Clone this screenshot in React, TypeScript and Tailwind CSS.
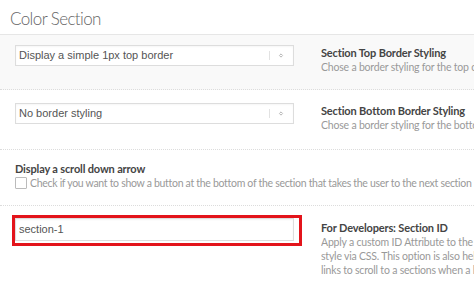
import { ChevronUp, ChevronDown } from 'lucide-react';

const SelectBox = ({ value }: { value: string }) => (
  <div className="h-[21px] w-[279px] shrink-0 border border-[#dddddd] bg-white flex items-center pl-[3px] pr-[9px] shadow-[inset_0_1px_2px_rgba(0,0,0,0.04)]">
    <span className="flex-1 text-[11px] text-[#555] font-['Liberation_Sans',Arial,sans-serif] whitespace-nowrap">{value}</span>
    <span className="h-[9px] w-px bg-[#e2e2e2] mr-[8px]" />
    <span className="flex flex-col items-center text-[#888] -space-y-[3px]">
      <ChevronUp className="h-[5px] w-[6px]" strokeWidth={3} />
      <ChevronDown className="h-[5px] w-[6px]" strokeWidth={3} />
    </span>
  </div>
);

const Help = ({ title, lines }: { title: string; lines: string[] }) => (
  <div className="flex-1 min-w-0 overflow-hidden">
    <div className="text-[11px] font-bold text-[#444] leading-[14px] tracking-[-0.15px] whitespace-nowrap">{title}</div>
    {lines.map(l => (
      <div key={l} className="text-[10.5px] text-[#999] leading-[14px] tracking-[-0.2px] whitespace-nowrap">{l}</div>
    ))}
  </div>
);

const App = () => {
  return (
    <div className="w-[474px] h-[288px] overflow-hidden bg-white font-['Lato',sans-serif]">
      {/* Header */}
      <div className="h-[35px] border-b border-[#e6e6e6] pl-[10px] pt-[8px]">
        <h2 className="text-[17px] font-light text-[#666] leading-[22px] tracking-[-0.6px]">Color Section</h2>
      </div>

      {/* Top border */}
      <div className="h-[55px] bg-[#f9f9f9] border-b border-dotted border-[#dcdcdc] flex pl-[15px] pt-[10px] gap-[27px]">
        <SelectBox value="Display a simple 1px top border" />
        <div className="flex-1 min-w-0 flex pt-[1px]">
          <Help title="Section Top Border Styling" lines={['Chose a border styling for the top of this section.']} />
        </div>
      </div>

      {/* Bottom border */}
      <div className="h-[60px] border-b border-dotted border-[#dcdcdc] flex pl-[15px] pt-[13px] gap-[27px]">
        <SelectBox value="No border styling" />
        <div className="flex-1 min-w-0 flex pt-[1px]">
          <Help title="Section Bottom Border Styling" lines={['Chose a border styling for the bottom of this section.']} />
        </div>
      </div>

      {/* Scroll arrow */}
      <div className="h-[56px] border-b border-dotted border-[#dcdcdc] pl-[15px] pt-[12px] overflow-hidden">
        <div className="text-[11px] font-bold text-[#444] leading-[14px] tracking-[-0.15px]">Display a scroll down arrow</div>
        <div className="flex items-center gap-[3px] whitespace-nowrap">
          <span className="h-[12px] w-[12px] border border-[#bbb] bg-white shrink-0 rounded-[1px]" />
          <span className="text-[10.5px] text-[#999] leading-[14px] tracking-[-0.3px]">Check if you want to show a button at the bottom of the section that takes the user to the next section by scrolling down.</span>
        </div>
      </div>

      {/* Section ID */}
      <div className="flex pl-[15px] pt-[12px] gap-[27px]">
        <div className="relative h-[23px] w-[279px] shrink-0">
          <div className="h-full border border-[#dddddd] bg-white flex items-center pl-[3px] text-[11px] text-[#555] font-['Liberation_Sans',Arial,sans-serif] shadow-[inset_0_1px_2px_rgba(0,0,0,0.05)]">
            section-1
          </div>
          <div className="absolute -left-[3px] -top-[3px] -right-[8px] -bottom-[5px] border-[3px] border-[#e3141b]" />
        </div>
        <div className="flex-1 min-w-0 flex pt-[3px]">
          <Help
            title="For Developers: Section ID"
            lines={[
              'Apply a custom ID Attribute to the section. This will allow you to target it and',
              'style via CSS. This option is also helpful for creating custom anchor',
              'links to scroll to a sections when a link is clicked.',
            ]}
          />
        </div>
      </div>
    </div>
  );
};

export default App;
